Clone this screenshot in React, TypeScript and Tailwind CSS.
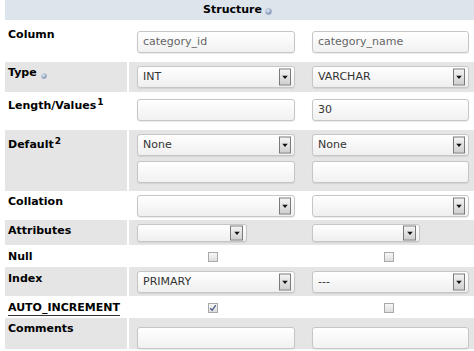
import React from "react";

const HelpIcon = ({ size = 7 }: { size?: number }) => (
  <svg width={size} height={size} viewBox="0 0 8 8" className="inline-block">
    <defs>
      <radialGradient id="hg" cx="40%" cy="35%" r="60%">
        <stop offset="0%" stopColor="#e8eef7" />
        <stop offset="100%" stopColor="#7d93b5" />
      </radialGradient>
    </defs>
    <circle cx="4" cy="4" r="3.6" fill="url(#hg)" />
  </svg>
);

const Arrow = ({ small }: { small?: boolean }) => (
  <span
    className={
      "absolute right-[3px] top-1/2 -translate-y-1/2 flex items-center justify-center border border-[#7a7a7a] bg-gradient-to-b from-[#f4f4f4] to-[#cfcfcf] " +
      (small ? "w-[13px] h-[15px]" : "w-[12px] h-[17px]")
    }
  >
    <svg width="6" height="4" viewBox="0 0 6 4">
      <path d="M0 0 L6 0 L3 3.5 Z" fill="#111" />
    </svg>
  </span>
);

const TextBox = ({ value = "", muted, w = "w-[158px]" }: { value?: string; muted?: boolean; w?: string }) => (
  <div
    className={`${w} h-[22px] rounded-[3px] border border-[#c6c6c6] bg-gradient-to-b from-white to-[#f1f1f1] shadow-[0_1px_1px_rgba(0,0,0,0.08)] flex items-center px-[5px] text-[11px] ${muted ? "text-[#666]" : "text-[#333]"}`}
  >
    {value}
  </div>
);

const Select = ({ value = "", w = "w-[158px]", small }: { value?: string; w?: string; small?: boolean }) => (
  <div
    className={`${w} ${small ? "h-[18px]" : "h-[22px]"} relative rounded-[3px] border border-[#c6c6c6] bg-gradient-to-b from-white to-[#efefef] shadow-[0_1px_1px_rgba(0,0,0,0.08)] flex items-center px-[5px] text-[11px] text-[#333]`}
  >
    {value}
    <Arrow small={small} />
  </div>
);

const Check = ({ checked }: { checked?: boolean }) => (
  <div className="w-[10px] h-[10px] border border-[#a9a9a9] bg-gradient-to-b from-[#f7f7f7] to-[#dedede] flex items-center justify-center">
    {checked && (
      <svg width="8" height="8" viewBox="0 0 8 8">
        <path d="M1.2 4.2 L3.2 6.3 L6.8 1.2" stroke="#4a5a86" strokeWidth="1.3" fill="none" />
      </svg>
    )}
  </div>
);

type RowProps = {
  label: React.ReactNode;
  gray?: boolean;
  h: string;
  lpt: string;
  vpt: string;
  a: React.ReactNode;
  b: React.ReactNode;
};

const Row = ({ label, gray, h, lpt, vpt, a, b }: RowProps) => (
  <div className={`flex ${h} ${gray ? "bg-[#e5e5e5]" : "bg-white"}`}>
    <div className={`w-[122px] pl-[3px] ${lpt} font-bold text-[11px] leading-[14px] text-black`}>{label}</div>
    <div className="w-[2px] bg-white" />
    <div className={`w-[175px] pl-[8px] ${vpt}`}>{a}</div>
    <div className={`flex-1 pl-[8px] ${vpt}`}>{b}</div>
  </div>
);

export default function App() {
  return (
    <div className="w-[474px] h-[351px] bg-white overflow-hidden font-['DejaVu_Sans',Verdana,sans-serif]">
      <div className="ml-[5px]">
        <div className="h-[20px] bg-[#dde4ec] flex items-center justify-center gap-[3px] text-[11px] font-bold text-black pr-[4px]">
          <span>Structure</span>
          <span className="mt-[4px]">
            <HelpIcon />
          </span>
        </div>

        <Row
          label="Column"
          h="h-[42px]"
          lpt="pt-[8px]"
          vpt="pt-[11px]"
          a={<TextBox value="category_id" muted />}
          b={<TextBox value="category_name" muted w="w-[157px]" />}
        />
        <Row
          gray
          label={
            <span>
              Type{" "}
              <span className="relative top-[3px]">
                <HelpIcon size={6} />
              </span>
            </span>
          }
          h="h-[30px]"
          lpt="pt-[4px]"
          vpt="pt-[4px]"
          a={<Select value="INT" />}
          b={<Select value="VARCHAR" w="w-[157px]" />}
        />
        <Row
          label={
            <span>
              Length/Values<sup className="text-[9px] -top-[4px] ml-[1px]">1</sup>
            </span>
          }
          h="h-[38px]"
          lpt="pt-[7px]"
          vpt="pt-[7px]"
          a={<TextBox />}
          b={<TextBox value="30" w="w-[157px]" />}
        />
        <Row
          gray
          label={
            <span>
              Default<sup className="text-[9px] -top-[4px] ml-[1px]">2</sup>
            </span>
          }
          h="h-[61px]"
          lpt="pt-[8px]"
          vpt="pt-[4px]"
          a={
            <div className="flex flex-col gap-[5px]">
              <Select value="None" />
              <TextBox />
            </div>
          }
          b={
            <div className="flex flex-col gap-[5px]">
              <Select value="None" w="w-[157px]" />
              <TextBox w="w-[157px]" />
            </div>
          }
        />
        <Row
          label="Collation"
          h="h-[29px]"
          lpt="pt-[4px]"
          vpt="pt-[4px]"
          a={<Select />}
          b={<Select w="w-[157px]" />}
        />
        <Row
          gray
          label="Attributes"
          h="h-[25px]"
          lpt="pt-[4px]"
          vpt="pt-[4px]"
          a={<Select w="w-[110px]" small />}
          b={<Select w="w-[108px]" small />}
        />
        <Row
          label="Null"
          h="h-[22px]"
          lpt="pt-[5px]"
          vpt="pt-[7px]"
          a={<div className="pl-[71px]"><Check /></div>}
          b={<div className="pl-[72px]"><Check /></div>}
        />
        <Row
          gray
          label="Index"
          h="h-[29px]"
          lpt="pt-[5px]"
          vpt="pt-[4px]"
          a={<Select value="PRIMARY" />}
          b={<Select value="---" w="w-[157px]" />}
        />
        <Row
          label={<span className="border-b border-[#333] pb-[1px]">AUTO_INCREMENT</span>}
          h="h-[22px]"
          lpt="pt-[5px]"
          vpt="pt-[7px]"
          a={<div className="pl-[71px]"><Check checked /></div>}
          b={<div className="pl-[72px]"><Check /></div>}
        />
        <Row
          gray
          label="Comments"
          h="h-[31px]"
          lpt="pt-[4px]"
          vpt="pt-[9px]"
          a={<TextBox />}
          b={<TextBox w="w-[157px]" />}
        />
      </div>
    </div>
  );
}
